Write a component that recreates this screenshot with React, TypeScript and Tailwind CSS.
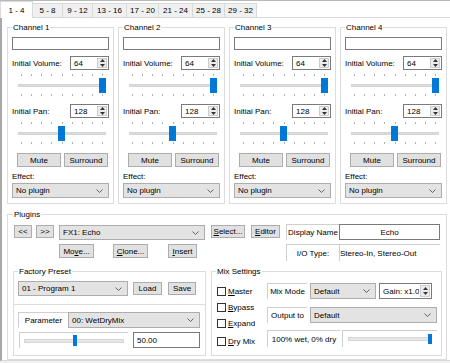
import React from 'react';

const tabs: [string, string][] = [
  ['1 - 4', 'w-[33px]'],
  ['5 - 8', 'w-[30px]'],
  ['9 - 12', 'w-[30px]'],
  ['13 - 16', 'w-[34px]'],
  ['17 - 20', 'w-[32px]'],
  ['21 - 24', 'w-[34px]'],
  ['25 - 28', 'w-[32px]'],
  ['29 - 32', 'w-[32px]'],
];

function Chevron() {
  return (
    <svg width="7" height="4" viewBox="0 0 7 4" className="shrink-0">
      <path d="M0.5 0.5 L3.5 3.5 L6.5 0.5" fill="none" stroke="#555" strokeWidth="0.9" />
    </svg>
  );
}

function Arrow({ up }: { up?: boolean }) {
  return (
    <svg width="5" height="3" viewBox="0 0 5 3">
      <path d={up ? 'M0 3 L2.5 0 L5 3 Z' : 'M0 0 L2.5 3 L5 0 Z'} fill="#333" />
    </svg>
  );
}

function Select({ label, className = '' }: { label: string; className?: string }) {
  return (
    <div className={`flex items-center justify-between bg-[#e3e3e3] border border-[#adadad] pl-[3px] pr-[5px] shrink-0 ${className}`}>
      <span className="whitespace-nowrap">{label}</span>
      <Chevron />
    </div>
  );
}

function Btn({ children, className = '' }: { children: React.ReactNode; className?: string }) {
  return (
    <div className={`flex items-center justify-center bg-[#e1e1e1] border border-[#adadad] whitespace-nowrap shrink-0 ${className}`}>
      {children}
    </div>
  );
}

function Field({ children, className = '' }: { children?: React.ReactNode; className?: string }) {
  return (
    <div className={`flex items-center bg-white border border-[#7a7a7a] px-[3px] whitespace-nowrap shrink-0 ${className}`}>
      {children}
    </div>
  );
}

function LabelBox({ children, className = '' }: { children: React.ReactNode; className?: string }) {
  return (
    <div className={`flex items-center justify-center border-t border-l border-[#cfcfcf] whitespace-nowrap shrink-0 ${className}`}>
      {children}
    </div>
  );
}

function Spin({ value, className = '' }: { value: string; className?: string }) {
  return (
    <div className={`flex bg-white border border-[#7a7a7a] shrink-0 ${className}`}>
      <span className="flex-1 flex items-center pl-[3px] whitespace-nowrap overflow-hidden">{value}</span>
      <div className="w-[10px] m-[1px] flex flex-col items-center justify-center gap-[2px] bg-[#ececec] border border-[#cdcdcd] shrink-0">
        <Arrow up />
        <Arrow />
      </div>
    </div>
  );
}

function Ticks() {
  return (
    <div className="flex justify-between px-[3px] h-[2px]">
      {Array.from({ length: 9 }).map((_, i) => (
        <div key={i} className="w-px h-[2px] bg-[#b0b0b0]" />
      ))}
    </div>
  );
}

function TickSlider({ thumb }: { thumb: number }) {
  return (
    <div className="relative h-[24px] ml-[6px] mr-[3px] pt-[1px] flex flex-col">
      <Ticks />
      <div className="mt-[8px] h-[3px] bg-[#dedede] border-y border-[#d2d2d2]" />
      <div className="mt-[7px]">
        <Ticks />
      </div>
      <div className="absolute top-[5px] w-[7px] h-[15px] bg-[#0078d7]" style={{ left: thumb }} />
    </div>
  );
}

function FlatSlider({ thumb, top, h, className = '' }: { thumb: number; top: number; h: number; className?: string }) {
  return (
    <div className={`relative flex items-center border-t border-l border-[#cfcfcf] shrink-0 ${className}`}>
      <div className="w-full h-[4px] bg-[#e7e7e7] border border-[#d6d6d6]" />
      <div className="absolute w-[4px] bg-[#0078d7]" style={{ left: thumb, top, height: h }} />
    </div>
  );
}

function Check({ children, className = '' }: { children: React.ReactNode; className?: string }) {
  return (
    <div className={`flex items-center gap-[2px] ${className}`}>
      <div className="w-[9px] h-[9px] bg-white border border-[#333]" />
      <span>{children}</span>
    </div>
  );
}

function Channel({ n }: { n: number }) {
  return (
    <fieldset className="w-[107px] border border-[#dcdcdc] px-[4px] pb-[5px] shrink-0">
      <legend className="px-[1px] ml-0">Channel {n}</legend>
      <Field className="mt-[5px] h-[13px]" />
      <div className="mt-[6px] flex items-center justify-between">
        <span>Initial Volume:</span>
        <Spin value="64" className="w-[39px] h-[14px]" />
      </div>
      <div className="mt-[3px]">
        <TickSlider thumb={81} />
      </div>
      <div className="mt-[7px] flex items-center justify-between">
        <span>Initial Pan:</span>
        <Spin value="128" className="w-[39px] h-[14px]" />
      </div>
      <div className="mt-[3px]">
        <TickSlider thumb={40} />
      </div>
      <div className="mt-[8px] flex pl-[5px] gap-[3px]">
        <Btn className="w-[44px] h-[14px]">Mute</Btn>
        <Btn className="w-[44px] h-[14px]">Surround</Btn>
      </div>
      <div className="mt-[5px]">Effect:</div>
      <Select label="No plugin" className="mt-[2px] h-[15px] w-full" />
    </fieldset>
  );
}

export default function App() {
  return (
    <div className="w-[450px] h-[363px] overflow-hidden bg-[#f0f0f0] font-['Liberation_Sans',Arial,sans-serif] text-[8px] leading-[9px] text-black flex flex-col">
      <div className="h-px bg-[#b9b9b9] shrink-0" />
      <div className="h-[16px] flex items-end bg-white shrink-0 relative z-10">
        {tabs.map(([t, w], i) =>
          i === 0 ? (
            <div key={t} className={`${w} h-[17px] -mb-px bg-white border-t border-l border-r border-[#d9d9d9] flex items-center justify-center`}>
              {t}
            </div>
          ) : (
            <div key={t} className={`${w} h-[14px] bg-[#f0f0f0] border-t border-r border-[#d9d9d9] flex items-center justify-center`}>
              {t}
            </div>
          )
        )}
      </div>

      <div className="h-[344px] shrink-0 bg-white border-t border-b border-[#d9d9d9] border-l-2 border-l-[#a9a9a9] pl-[5px] pt-[5px]">
        <div className="flex gap-[4px]">
          <Channel n={1} />
          <Channel n={2} />
          <Channel n={3} />
          <Channel n={4} />
        </div>

        <fieldset className="mt-[6px] w-[440px] border border-[#dcdcdc] pb-[3px]">
          <legend className="ml-[5px] px-[1px]">Plugins</legend>

          <div className="mt-[5px] flex items-start h-[16px]">
            <Btn className="ml-[6px] mt-[1px] w-[18px] h-[13px]">&lt;&lt;</Btn>
            <Btn className="ml-[4px] mt-[1px] w-[18px] h-[13px]">&gt;&gt;</Btn>
            <Select label="FX1: Echo" className="ml-[5px] mt-[1px] w-[146px] h-[15px]" />
            <Btn className="ml-[6px] mt-[1px] w-[34px] h-[13px] border-[#0078d7]">
              <span className="underline">S</span>elect...
            </Btn>
            <Btn className="ml-[6px] mt-[1px] w-[29px] h-[13px]">
              <span className="underline">E</span>ditor
            </Btn>
            <LabelBox className="ml-[6px] w-[53px] h-[16px]">Display Name</LabelBox>
            <Field className="w-[101px] h-[16px] justify-center">Echo</Field>
          </div>

          <div className="mt-[4px] flex items-start h-[17px]">
            <Btn className="ml-[51px] w-[35px] h-[14px]">
              Mo<span className="underline">v</span>e...
            </Btn>
            <Btn className="ml-[19px] w-[35px] h-[14px]">
              <span className="underline">C</span>lone...
            </Btn>
            <Btn className="ml-[20px] w-[29px] h-[14px]">
              <span className="underline">I</span>nsert
            </Btn>
            <LabelBox className="ml-[89px] w-[53px] h-[17px]">I/O Type:</LabelBox>
            <div className="w-[101px] h-[17px] border-t border-l border-[#cfcfcf] flex items-center whitespace-nowrap">
              Stereo-In, Stereo-Out
            </div>
          </div>

          <div className="mt-[6px] flex">
            <fieldset className="ml-[5px] w-[193px] h-[89px] border border-[#dcdcdc] shrink-0">
              <legend className="ml-[4px] px-[1px]">Factory Preset</legend>
              <div className="mt-[5px] flex items-start h-[15px]">
                <Select label="01 - Program 1" className="ml-[4px] w-[110px] h-[15px]" />
                <Btn className="ml-[5px] mt-[1px] w-[29px] h-[13px]">Load</Btn>
                <Btn className="ml-[6px] mt-[1px] w-[28px] h-[13px]">Save</Btn>
              </div>
              <div className="mt-[8px] h-px bg-[#dcdcdc]" />
              <div className="mt-[7px] flex">
                <LabelBox className="ml-[4px] w-[50px] h-[16px]">Parameter</LabelBox>
                <Select label="00: WetDryMix" className="w-[132px] h-[16px]" />
              </div>
              <div className="mt-[4px] flex">
                <FlatSlider thumb={53} top={2} h={11} className="ml-[5px] w-[109px] h-[16px] px-[4px]" />
                <Field className="ml-[5px] w-[67px] h-[16px]">50.00</Field>
              </div>
            </fieldset>

            <fieldset className="ml-[5px] w-[231px] h-[89px] border border-[#dcdcdc] shrink-0">
              <legend className="ml-[4px] px-[1px]">Mix Settings</legend>
              <div className="flex">
                <div className="w-[55px] pl-[5px] shrink-0">
                  <Check className="mt-[11px]">
                    <span className="underline">M</span>aster
                  </Check>
                  <Check className="mt-[7px]">
                    <span className="underline">B</span>ypass
                  </Check>
                  <Check className="mt-[7px]">
                    <span className="underline">E</span>xpand
                  </Check>
                  <Check className="mt-[9px]">
                    <span className="underline">D</span>ry Mix
                  </Check>
                </div>
                <div className="flex flex-col">
                  <div className="mt-[7px] flex">
                    <LabelBox className="w-[40px] h-[16px]">Mix Mode</LabelBox>
                    <Select label="Default" className="ml-[3px] w-[66px] h-[16px]" />
                    <Spin value="Gain: x1.0" className="ml-[3px] w-[53px] h-[16px]" />
                  </div>
                  <div className="mt-[8px] flex">
                    <LabelBox className="w-[40px] h-[16px]">Output to</LabelBox>
                    <Select label="Default" className="ml-[3px] w-[127px] h-[16px]" />
                  </div>
                  <div className="mt-[7px] flex">
                    <LabelBox className="w-[73px] h-[17px]">100% wet, 0% dry</LabelBox>
                    <FlatSlider thumb={85} top={3} h={10} className="ml-[2px] w-[95px] h-[17px] pl-[5px] pr-[7px]" />
                  </div>
                </div>
              </div>
            </fieldset>
          </div>
        </fieldset>
      </div>
    </div>
  );
}
